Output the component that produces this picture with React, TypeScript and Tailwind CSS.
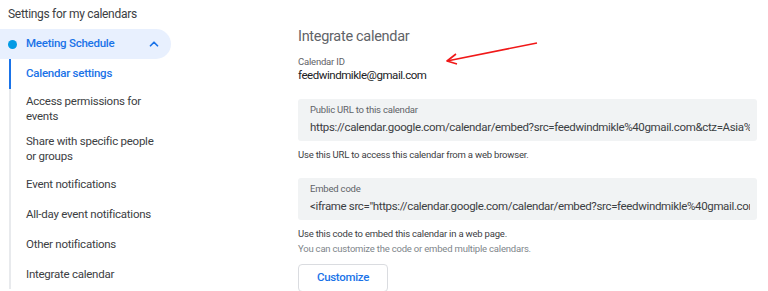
import { ChevronUp } from "lucide-react";

const ITEMS: { label: string; twoLine?: boolean }[] = [
  { label: "Access permissions for events", twoLine: true },
  { label: "Share with specific people or groups", twoLine: true },
  { label: "Event notifications" },
  { label: "All-day event notifications" },
  { label: "Other notifications" },
  { label: "Integrate calendar" },
];

function Sidebar() {
  return (
    <div className="w-[298px] shrink-0">
      <div className="pl-2 pt-[6px] h-[29px] text-[12px] tracking-[-0.3px] leading-[16px] text-[#3c4043]">
        Settings for my calendars
      </div>
      <div className="flex items-center h-[30px] w-[171px] rounded-r-full bg-[#e8f0fe] pl-[8px] pr-[10px]">
        <span className="w-[9px] h-[9px] rounded-full bg-[#039be5]" />
        <span className="ml-[9px] flex-1 text-[11.5px] tracking-[-0.25px] font-medium text-[#1a73e8]">
          Meeting Schedule
        </span>
        <ChevronUp className="w-[14px] h-[14px] text-[#1a73e8]" strokeWidth={3} />
      </div>
      <div className="ml-[9px] border-l-2 border-[#e8eaed]">
        <div className="-ml-[2px] border-l-2 border-[#1a73e8] h-[30px] flex items-center pl-[15px] text-[11.5px] tracking-[-0.25px] font-medium text-[#1a73e8]">
          Calendar settings
        </div>
        {ITEMS.map((item) => (
          <div
            key={item.label}
            className={`pl-[15px] text-[11.5px] tracking-[-0.25px] leading-[15px] text-[#3c4043] ${
              item.twoLine ? "py-[5px] w-[147px]" : "h-[30px] flex items-center"
            }`}
          >
            {item.label}
          </div>
        ))}
      </div>
    </div>
  );
}

function CodeBox({ label, value }: { label: string; value: string }) {
  return (
    <div className="bg-[#f1f3f4] rounded-[3px] pl-3 pr-[7px] pt-[5px] pb-[6px] overflow-hidden">
      <div className="text-[9.5px] tracking-[-0.2px] leading-[12px] text-[#5f6368]">{label}</div>
      <div className="mt-[3px] text-[11.5px] tracking-[-0.35px] leading-[16px] text-[#3c4043] whitespace-nowrap overflow-hidden">
        {value}
      </div>
    </div>
  );
}

export default function App() {
  return (
    <div className="flex w-[768px] h-[291px] overflow-hidden bg-white font-['Roboto',sans-serif]">
      <Sidebar />
      <div className="relative flex-1 min-w-0 pr-[11px]">
        <div className="mt-[27px] text-[14.5px] tracking-[-0.3px] leading-[20px] text-[#5f6368]">
          Integrate calendar
        </div>
        <div className="mt-[9px] text-[9.5px] tracking-[-0.2px] leading-[12px] text-[#5f6368]">
          Calendar ID
        </div>
        <div className="text-[11.5px] tracking-[-0.45px] leading-[14px] text-[#202124]">
          feedwindmikle@gmail.com
        </div>
        <div className="mt-[17px]">
          <CodeBox
            label="Public URL to this calendar"
            value="https://calendar.google.com/calendar/embed?src=feedwindmikle%40gmail.com&ctz=Asia%2FKolkata"
          />
        </div>
        <div className="mt-[7px] text-[9.5px] tracking-[-0.2px] leading-[14px] text-[#3c4043]">
          Use this URL to access this calendar from a web browser.
        </div>
        <div className="mt-[16px]">
          <CodeBox
            label="Embed code"
            value={'<iframe src="https://calendar.google.com/calendar/embed?src=feedwindmikle%40gmail.com&ctz=Asia%2FKolkata"'}
          />
        </div>
        <div className="mt-[6px] text-[9.5px] tracking-[-0.2px] leading-[15px] text-[#3c4043]">
          Use this code to embed this calendar in a web page.
        </div>
        <div className="text-[9.5px] tracking-[-0.2px] leading-[15px] text-[#80868b]">
          You can customize the code or embed multiple calendars.
        </div>
        <button className="mt-[8px] w-[90px] h-[28px] rounded-[4px] border border-[#dadce0] bg-white text-[11.5px] tracking-[-0.3px] font-medium text-[#1a73e8]">
          Customize
        </button>
        <svg
          className="absolute left-[146px] top-[40px]"
          width="96"
          height="26"
          viewBox="0 0 96 26"
        >
          <line x1="93" y1="3" x2="3" y2="21" stroke="#f01818" strokeWidth="1.6" />
          <polyline
            points="12,14 3,21 13,24"
            fill="none"
            stroke="#f01818"
            strokeWidth="1.6"
            strokeLinejoin="round"
          />
        </svg>
      </div>
    </div>
  );
}
